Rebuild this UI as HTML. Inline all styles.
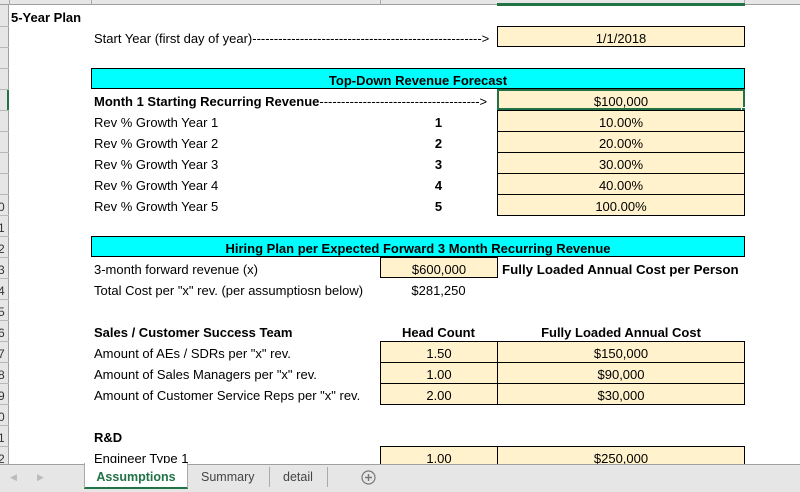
<!DOCTYPE html>
<html><head><meta charset="utf-8"><style>
*{margin:0;padding:0;box-sizing:border-box}
body{width:800px;height:492px;overflow:hidden;background:#fff;font-family:"Liberation Sans",Arial,sans-serif;font-size:13px;color:#000;position:relative}
.a{position:absolute;white-space:nowrap}
.c{position:absolute;height:21px;line-height:26px;white-space:nowrap;overflow:hidden}
.bx{background:#fff2cc;border:1px solid #000;text-align:center;line-height:24px}
.cy{background:#00ffff;border:1px solid #000;text-align:center;font-weight:bold;line-height:24px}
b{font-weight:bold}
.ctr{text-align:center}
</style></head><body>
<div class="a" style="left:0;top:0;width:800px;height:5px;background:#e6e6e6;border-bottom:1px solid #9e9e9e"></div>
<div class="a" style="left:9px;top:0;width:1px;height:5px;background:#aaa"></div>
<div class="a" style="left:91px;top:0;width:1px;height:5px;background:#aaa"></div>
<div class="a" style="left:380px;top:0;width:1px;height:5px;background:#aaa"></div>
<div class="a" style="left:744px;top:0;width:1px;height:5px;background:#aaa"></div>
<div class="a" style="left:497px;top:3px;width:248px;height:3px;background:#217346"></div>
<div class="a" style="left:0;top:5px;width:9px;height:460px;background:#e6e6e6;border-right:1px solid #9e9e9e"></div>
<div class="a" style="left:7px;top:89px;width:2px;height:21px;background:#217346"></div>
<div id="rl"></div>
<script>
var s='';for(var y=26;y<464;y+=21){s+='<div class="a" style="left:0;top:'+y+'px;width:9px;height:1px;background:#b8b8b8"></div>';}
document.getElementById('rl').innerHTML=s;
</script>
<div class="a" style="left:-2px;top:197px;font-size:12px;color:#333;line-height:21px">0<br>1<br>2<br>3<br>4<br>5<br>6<br>7<br>8<br>9<br>0<br>1<br>2</div>

<div class="c" style="left:11px;top:5px"><b>5-Year Plan</b></div>
<div class="c" style="left:94px;top:26px">Start Year (first day of year)-----------------------------------------------------&gt;</div>
<div class="c bx" style="left:497px;top:26px;width:248px">1/1/2018</div>

<div class="c cy" style="left:91px;top:68px;width:654px">Top-Down Revenue Forecast</div>
<div class="c" style="left:94px;top:89px"><b>Month 1 Starting Recurring Revenue</b>-------------------------------------&gt;</div>
<div class="c bx" style="left:497px;top:89px;width:248px;border:2px solid #217346;line-height:22px">$100,000</div>
<div class="a" style="left:741px;top:107px;width:5px;height:5px;background:#217346;border:1px solid #fff"></div>
<div class="c" style="left:94px;top:110px">Rev % Growth Year 1</div>
<div class="c" style="left:94px;top:131px">Rev % Growth Year 2</div>
<div class="c" style="left:94px;top:152px">Rev % Growth Year 3</div>
<div class="c" style="left:94px;top:173px">Rev % Growth Year 4</div>
<div class="c" style="left:94px;top:194px">Rev % Growth Year 5</div>
<div class="c ctr" style="left:380px;top:110px;width:117px"><b>1</b></div>
<div class="c ctr" style="left:380px;top:131px;width:117px"><b>2</b></div>
<div class="c ctr" style="left:380px;top:152px;width:117px"><b>3</b></div>
<div class="c ctr" style="left:380px;top:173px;width:117px"><b>4</b></div>
<div class="c ctr" style="left:380px;top:194px;width:117px"><b>5</b></div>
<div class="c bx" style="left:497px;top:110px;width:248px;height:22px">10.00%</div>
<div class="c bx" style="left:497px;top:131px;width:248px;height:22px">20.00%</div>
<div class="c bx" style="left:497px;top:152px;width:248px;height:22px">30.00%</div>
<div class="c bx" style="left:497px;top:173px;width:248px;height:22px">40.00%</div>
<div class="c bx" style="left:497px;top:194px;width:248px;height:22px">100.00%</div>

<div class="c cy" style="left:91px;top:236px;width:654px">Hiring Plan per Expected Forward 3 Month Recurring Revenue</div>
<div class="c" style="left:94px;top:257px">3-month forward revenue (x)</div>
<div class="c bx" style="left:380px;top:257px;width:118px">$600,000</div>
<div class="c" style="left:502px;top:257px;font-size:13.3px"><b>Fully Loaded Annual Cost per Person</b></div>
<div class="c" style="left:94px;top:278px">Total Cost per "x" rev. (per assumptiosn below)</div>
<div class="c ctr" style="left:380px;top:278px;width:117px">$281,250</div>

<div class="c" style="left:94px;top:320px"><b>Sales / Customer Success Team</b></div>
<div class="c ctr" style="left:380px;top:320px;width:117px"><b>Head Count</b></div>
<div class="c ctr" style="left:497px;top:320px;width:248px"><b>Fully Loaded Annual Cost</b></div>
<div class="c" style="left:94px;top:341px">Amount of AEs / SDRs per "x" rev.</div>
<div class="c" style="left:94px;top:362px">Amount of Sales Managers per "x" rev.</div>
<div class="c" style="left:94px;top:383px">Amount of Customer Service Reps per "x" rev.</div>
<div class="c bx" style="left:380px;top:341px;width:118px;height:22px">1.50</div>
<div class="c bx" style="left:380px;top:362px;width:118px;height:22px">1.00</div>
<div class="c bx" style="left:380px;top:383px;width:118px;height:22px">2.00</div>
<div class="c bx" style="left:497px;top:341px;width:248px;height:22px">$150,000</div>
<div class="c bx" style="left:497px;top:362px;width:248px;height:22px">$90,000</div>
<div class="c bx" style="left:497px;top:383px;width:248px;height:22px">$30,000</div>

<div class="c" style="left:94px;top:425px"><b>R&amp;D</b></div>
<div class="c" style="left:94px;top:446px">Engineer Type 1</div>
<div class="c bx" style="left:380px;top:446px;width:118px;height:22px">1.00</div>
<div class="c bx" style="left:497px;top:446px;width:248px;height:22px">$250,000</div>

<div class="a" style="left:0;top:464px;width:800px;height:28px;background:#e6e6e6;border-top:1px solid #a0a0a0"></div>
<div class="a" style="left:10px;top:472px;color:#bbb;font-size:9px">&#9664;</div>
<div class="a" style="left:37px;top:472px;color:#bbb;font-size:9px">&#9654;</div>
<div class="a" style="left:84px;top:463px;width:104px;height:26px;background:#fff;border-left:1px solid #aaa;border-right:1px solid #aaa;border-bottom:2px solid #217346"></div>
<div class="a" style="left:84px;top:470px;width:104px;text-align:center;font-weight:bold;color:#217346;font-size:12.5px">Assumptions</div>
<div class="a" style="left:201px;top:470px;color:#444;font-size:12.5px">Summary</div>
<div class="a" style="left:269px;top:467px;width:1px;height:20px;background:#aaa"></div>
<div class="a" style="left:283px;top:470px;color:#444;font-size:12.5px">detail</div>
<div class="a" style="left:327px;top:467px;width:1px;height:20px;background:#aaa"></div>
<svg class="a" style="left:361px;top:470px" width="15" height="15"><circle cx="7.5" cy="7.5" r="6.5" fill="none" stroke="#777" stroke-width="1.2"/><path d="M7.5 4v7M4 7.5h7" stroke="#777" stroke-width="1.4"/></svg>
</body></html>
